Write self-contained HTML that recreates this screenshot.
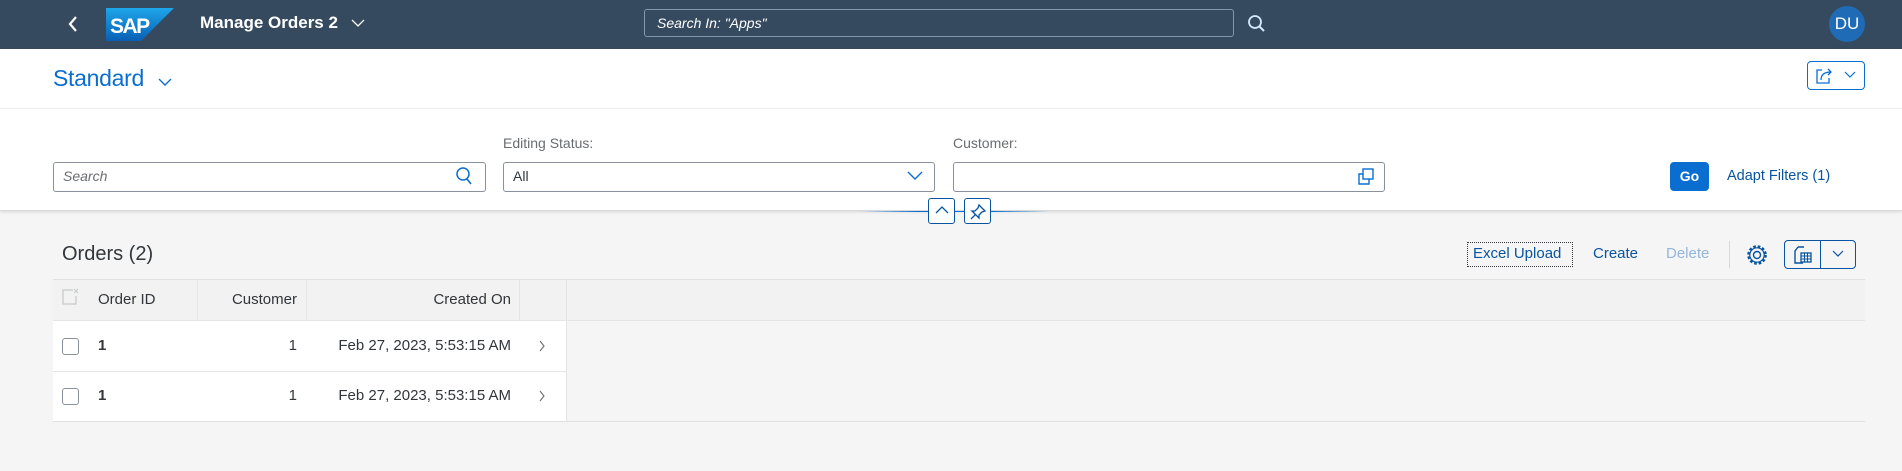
<!DOCTYPE html>
<html><head><meta charset="utf-8"><style>
*{box-sizing:border-box;margin:0;padding:0}
body{width:1902px;height:471px;overflow:hidden;background:#f5f5f5;font-family:"Liberation Sans",Arial,sans-serif;position:relative;color:#32363a}
.a{position:absolute}
.hdr{left:0;top:0;width:1902px;height:49px;background:#354a5f}
.inp{border:1px solid #89919a;border-radius:3px;background:#fff;height:30px}
.t{white-space:nowrap}
</style></head><body>
<div class="a hdr"></div>
<svg class="a" style="left:66px;top:14px" width="14" height="20"><path d="M10 3 L4 10 L10 17" stroke="#fff" stroke-width="2.2" fill="none"/></svg>
<svg class="a" style="left:106px;top:8px" width="68" height="33"><defs><linearGradient id="g" x1="0" y1="0" x2="0" y2="1"><stop offset="0" stop-color="#1ea6ea"/><stop offset="1" stop-color="#0a5fb4"/></linearGradient></defs><polygon points="0,0 68,0 35,33 0,33" fill="url(#g)"/><text x="4" y="25" font-family="Liberation Sans" font-weight="bold" font-size="21" fill="#fff" letter-spacing="-1.5">SAP</text></svg>
<div class="a t" style="left:200px;top:13px;color:#fff;font-size:17px;font-weight:bold">Manage Orders 2</div>
<svg class="a" style="left:351px;top:18px" width="14" height="10"><path d="M1 2 L7 8 L13 2" stroke="#fff" stroke-width="1.3" fill="none"/></svg>
<div class="a" style="left:644px;top:9px;width:590px;height:28px;border:1px solid #8696a9;border-radius:3px"></div>
<div class="a t" style="left:657px;top:15px;color:#fff;font-size:14px;font-style:italic">Search In: "Apps"</div>
<svg class="a" style="left:1247px;top:14px" width="20" height="20"><circle cx="8" cy="8" r="6" stroke="#d1e8ff" stroke-width="1.8" fill="none"/><path d="M12.5 12.5 L17 17" stroke="#d1e8ff" stroke-width="2"/></svg>
<div class="a" style="left:1829px;top:6px;width:36px;height:36px;border-radius:50%;background:#1f6bb5;color:#fff;font-size:17px;text-align:center;line-height:36px">DU</div>

<div class="a" style="left:0;top:49px;width:1902px;height:162px;background:#fff;border-bottom:1px solid #d9d9d9;box-shadow:0 1px 3px rgba(0,0,0,.12)"></div>
<div class="a" style="left:0;top:108px;width:1902px;height:1px;background:#eeeeee"></div>
<div class="a t" style="left:53px;top:65px;color:#0a6ed1;font-size:23px;letter-spacing:-0.3px">Standard</div>
<svg class="a" style="left:157px;top:77px" width="16" height="10"><path d="M2 2 L8 8 L14 2" stroke="#0a6ed1" stroke-width="1.4" fill="none"/></svg>
<div class="a" style="left:1807px;top:61px;width:58px;height:29px;border:1px solid #0a6ed1;border-radius:4px"></div>
<svg class="a" style="left:1815px;top:67px" width="20" height="18"><path d="M7 3 H2 V16 H14 V11" stroke="#0a6ed1" stroke-width="1.3" fill="none"/><path d="M6 13 C6 7 10 5 16 5 M13 2 L16 5 L13 8" stroke="#0a6ed1" stroke-width="1.3" fill="none"/></svg>
<svg class="a" style="left:1844px;top:71px" width="12" height="8"><path d="M1 1 L6 6 L11 1" stroke="#0a6ed1" stroke-width="1.2" fill="none"/></svg>

<div class="a t" style="left:503px;top:135px;color:#6a6d70;font-size:14px">Editing Status:</div>
<div class="a t" style="left:953px;top:135px;color:#6a6d70;font-size:14px">Customer:</div>
<div class="a inp" style="left:53px;top:162px;width:433px"></div>
<div class="a t" style="left:63px;top:168px;color:#6a6d70;font-size:14px;font-style:italic">Search</div>
<svg class="a" style="left:455px;top:166px" width="20" height="22"><circle cx="8" cy="8" r="6" stroke="#0a6ed1" stroke-width="1.5" fill="none"/><path d="M12 13 L16 18" stroke="#0a6ed1" stroke-width="1.6"/></svg>
<div class="a inp" style="left:503px;top:162px;width:432px"></div>
<div class="a t" style="left:513px;top:168px;color:#32363a;font-size:14px">All</div>
<svg class="a" style="left:907px;top:171px" width="16" height="10"><path d="M1 1 L8 8 L15 1" stroke="#0a6ed1" stroke-width="1.4" fill="none"/></svg>
<div class="a inp" style="left:953px;top:162px;width:432px"></div>
<svg class="a" style="left:1357px;top:168px" width="18" height="18"><rect x="6" y="1" width="10" height="10" stroke="#0a6ed1" stroke-width="1.4" fill="none"/><path d="M6 6 H2 V16 H12 V11" stroke="#0a6ed1" stroke-width="1.4" fill="none"/></svg>
<div class="a" style="left:1670px;top:162px;width:39px;height:29px;background:#0a6ed1;border-radius:4px;color:#fff;font-weight:bold;font-size:14px;text-align:center;line-height:29px">Go</div>
<div class="a t" style="left:1727px;top:168px;color:#0854a0;font-size:14.5px">Adapt Filters (1)</div>

<div class="a" style="left:860px;top:211px;width:190px;height:1px;background:linear-gradient(90deg,rgba(10,110,209,0),#0a6ed1 30%,#0a6ed1 70%,rgba(10,110,209,0))"></div>
<div class="a" style="left:928px;top:198px;width:27px;height:26px;background:#fff;border:1px solid #0854a0;border-radius:3px"></div>
<svg class="a" style="left:934px;top:205px" width="16" height="10"><path d="M2 8 L8 2 L14 8" stroke="#0854a0" stroke-width="1.3" fill="none"/></svg>
<div class="a" style="left:964px;top:198px;width:27px;height:26px;background:#fff;border:1px solid #0854a0;border-radius:3px"></div>
<svg class="a" style="left:969px;top:203px" width="18" height="18"><path d="M10 2 L16 8 L13 9 L10 12 L10 15 L3 8 L6 8 L9 5 Z M6 12 L2 16" stroke="#0854a0" stroke-width="1.3" fill="none"/></svg>

<div class="a t" style="left:62px;top:243px;color:#32363a;font-size:20px">Orders (2)</div>
<div class="a" style="left:1467px;top:242px;width:106px;height:25px;border:1px dotted #32363a"></div>
<div class="a t" style="left:1473px;top:245px;color:#0854a0;font-size:15px">Excel Upload</div>
<div class="a t" style="left:1593px;top:245px;color:#0854a0;font-size:15px">Create</div>
<div class="a t" style="left:1666px;top:245px;color:#93b6da;font-size:15px">Delete</div>
<div class="a" style="left:1729px;top:241px;width:1px;height:27px;background:#d9d9d9"></div>
<svg class="a" style="left:1745px;top:243px" width="24" height="24"><circle cx="12" cy="12" r="3.5" stroke="#0854a0" stroke-width="1.4" fill="none"/><circle cx="12" cy="12" r="8.5" stroke="#0854a0" stroke-width="2.6" stroke-dasharray="2.6 1.9" fill="none"/><circle cx="12" cy="12" r="7.2" stroke="#0854a0" stroke-width="1.2" fill="none"/></svg>
<div class="a" style="left:1784px;top:240px;width:72px;height:29px;border:1px solid #0854a0;border-radius:4px"></div>
<div class="a" style="left:1820px;top:241px;width:1px;height:27px;background:#0854a0"></div>
<svg class="a" style="left:1793px;top:245px" width="20" height="20"><path d="M5 2 H11 M5 2 L2 6 V18 H10" stroke="#0854a0" stroke-width="1.4" fill="none"/><rect x="8" y="8" width="10" height="9" stroke="#0854a0" stroke-width="1.3" fill="none"/><path d="M8 11 H18 M8 14 H18 M11.5 8 V17 M14.5 8 V17" stroke="#0854a0" stroke-width="1"/></svg>
<svg class="a" style="left:1832px;top:250px" width="12" height="8"><path d="M1 1 L6 6 L11 1" stroke="#0854a0" stroke-width="1.2" fill="none"/></svg>

<div class="a" style="left:53px;top:279px;width:1812px;height:42px;background:#f2f2f2;border-top:1px solid #e0e0e0;border-bottom:1px solid #e5e5e5"></div>
<div class="a" style="left:197px;top:280px;width:1px;height:41px;background:#e5e5e5"></div>
<div class="a" style="left:306px;top:280px;width:1px;height:41px;background:#e5e5e5"></div>
<div class="a" style="left:519px;top:280px;width:1px;height:41px;background:#e5e5e5"></div>
<div class="a" style="left:566px;top:280px;width:1px;height:142px;background:#e5e5e5"></div>
<svg class="a" style="left:61px;top:288px" width="18" height="18"><path d="M12 2 H2 V16 H15 V8" stroke="#c6c8ca" stroke-width="1.2" fill="none"/><path d="M13 1 L17 5 M17 1 L13 5" stroke="#c6c8ca" stroke-width="1"/></svg>
<div class="a t" style="left:98px;top:291px;font-size:15px">Order ID</div>
<div class="a t" style="left:197px;top:291px;width:100px;text-align:right;font-size:15px">Customer</div>
<div class="a t" style="left:306px;top:291px;width:205px;text-align:right;font-size:15px">Created On</div>

<div class="a" style="left:53px;top:321px;width:513px;height:51px;background:#fff;border-bottom:1px solid #e5e5e5"></div>
<div class="a" style="left:53px;top:372px;width:513px;height:50px;background:#fff;border-bottom:1px solid #e0e0e0"></div>
<div class="a" style="left:566px;top:421px;width:1299px;height:1px;background:#e0e0e0"></div>

<div class="a" style="left:62px;top:338px;width:17px;height:17px;border:1px solid #89919a;border-radius:3px;background:#fff"></div>
<div class="a t" style="left:98px;top:337px;font-size:15px;font-weight:bold">1</div>
<div class="a t" style="left:197px;top:337px;width:100px;text-align:right;font-size:15px">1</div>
<div class="a t" style="left:306px;top:337px;width:205px;text-align:right;font-size:15px">Feb 27, 2023, 5:53:15 AM</div>
<svg class="a" style="left:538px;top:340px" width="8" height="12"><path d="M2 1 L6 6 L2 11" stroke="#6a6d70" stroke-width="1.1" fill="none"/></svg>

<div class="a" style="left:62px;top:388px;width:17px;height:17px;border:1px solid #89919a;border-radius:3px;background:#fff"></div>
<div class="a t" style="left:98px;top:387px;font-size:15px;font-weight:bold">1</div>
<div class="a t" style="left:197px;top:387px;width:100px;text-align:right;font-size:15px">1</div>
<div class="a t" style="left:306px;top:387px;width:205px;text-align:right;font-size:15px">Feb 27, 2023, 5:53:15 AM</div>
<svg class="a" style="left:538px;top:390px" width="8" height="12"><path d="M2 1 L6 6 L2 11" stroke="#6a6d70" stroke-width="1.1" fill="none"/></svg>
</body></html>
